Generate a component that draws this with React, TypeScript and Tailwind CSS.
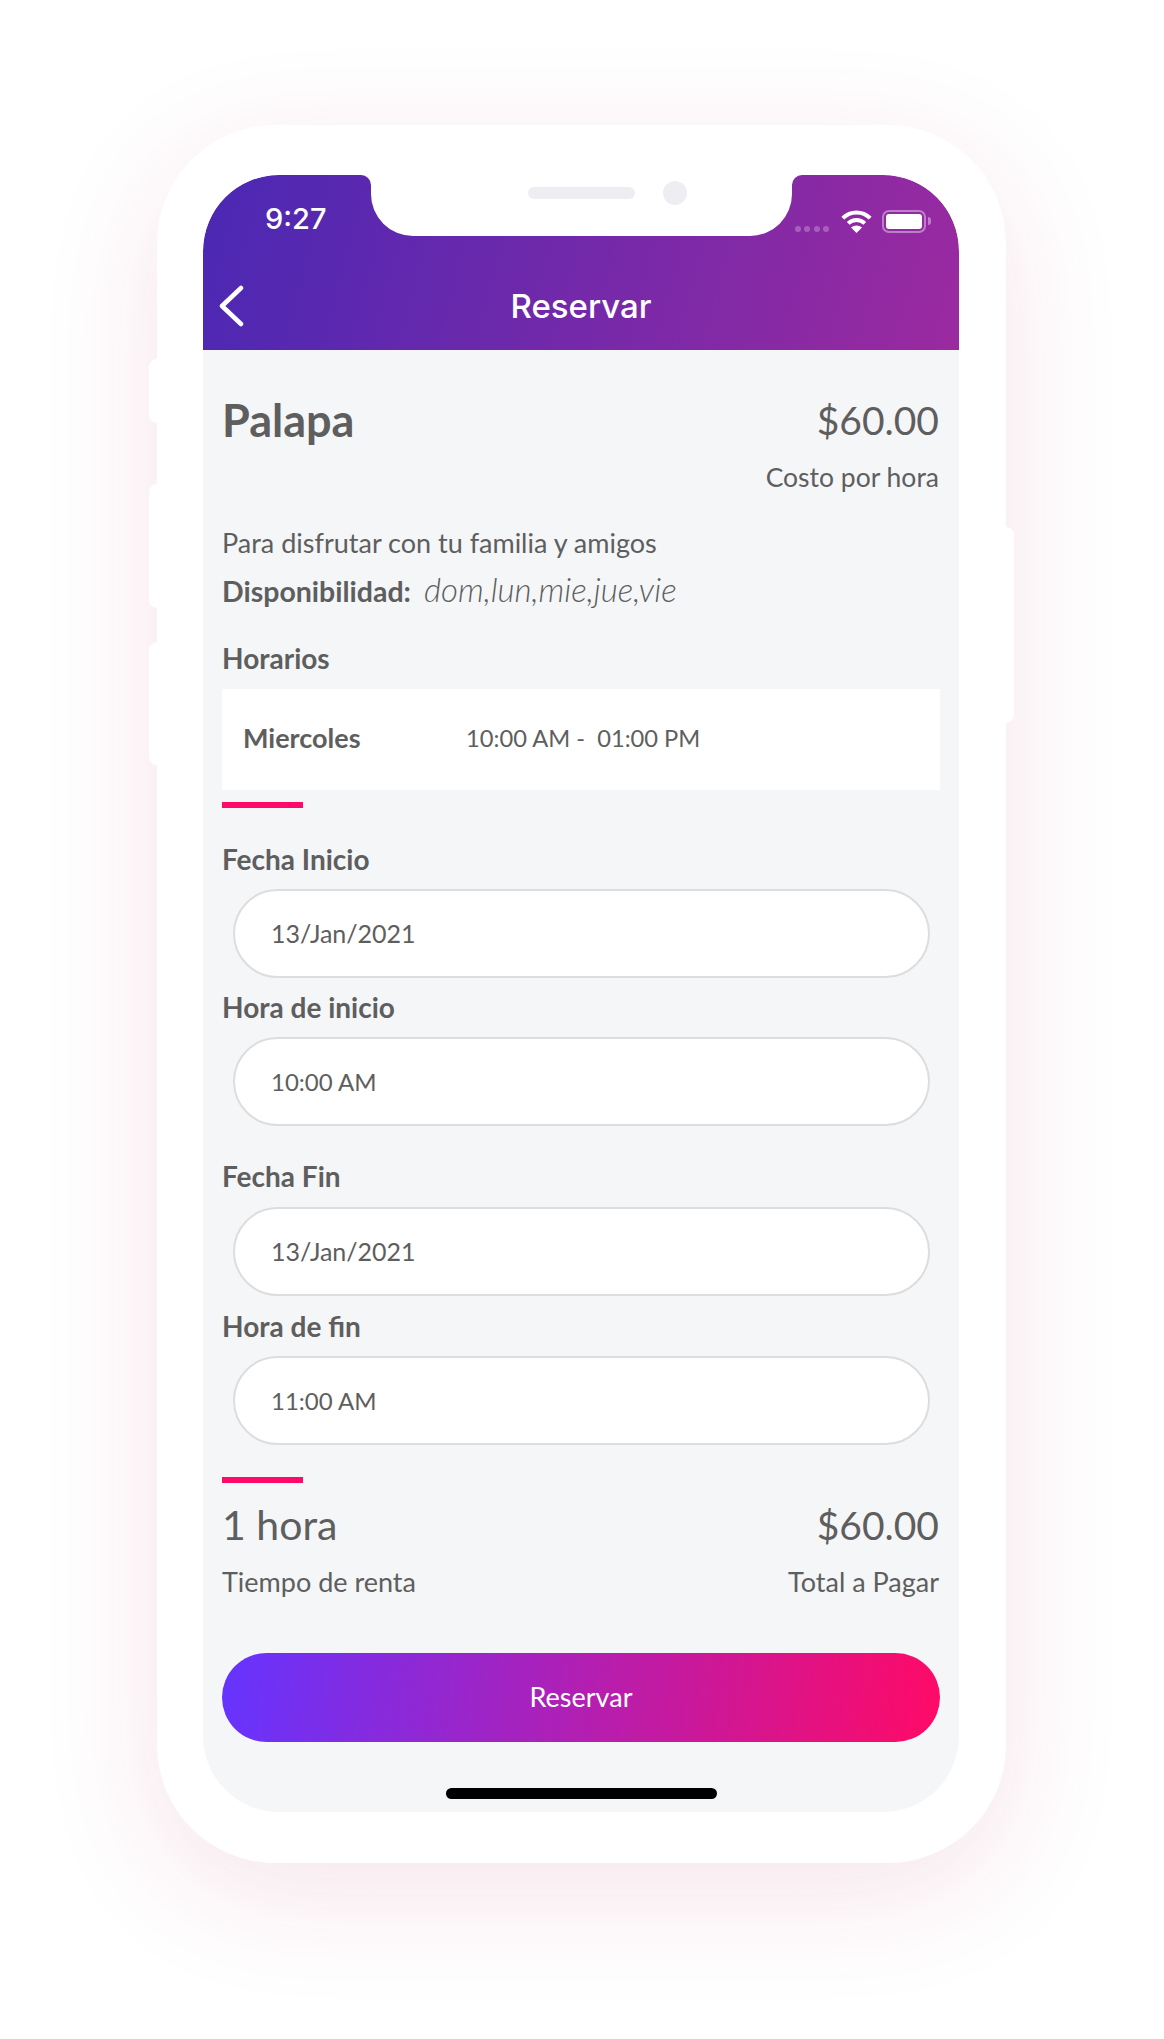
import React from "react";

const Label = ({ text, className }: { text: string; className: string }) => (
  <p className={`h-[34px] text-[28px] leading-[32px] font-bold ${className}`}>{text}</p>
);

const Field = ({ value, className }: { value: string; className: string }) => (
  <div
    className={`ml-[11px] mr-[10px] flex h-[89px] items-center rounded-full border-2 border-[#dddddd] bg-white pl-[36px] ${className}`}
  >
    {value}
  </div>
);

const RedBar = ({ className }: { className: string }) => (
  <div className={`h-[6px] w-[81px] bg-[#ff0a68] ${className}`} />
);

const Wifi = () => (
  <svg width="31" height="24" viewBox="0 0 31 24" fill="none" stroke="white">
    <path d="M1.8 9.2C9.5 1.6 21.5 1.6 29.2 9.2" strokeWidth="4" />
    <path d="M7.2 14.4C12 9.8 19 9.8 23.8 14.4" strokeWidth="4" />
    <path d="M15.5 24L10 18.6C13 15.8 18 15.8 21 18.6Z" fill="white" stroke="none" />
  </svg>
);

const Battery = () => (
  <div className="flex items-center gap-[2px]">
    <div className="h-[23px] w-[44px] rounded-[7px] border-2 border-white/40 p-[2px]">
      <div className="h-full w-full rounded-[3px] bg-white" />
    </div>
    <div className="h-[8px] w-[3px] rounded-r-full bg-white/40" />
  </div>
);

const App = () => {
  return (
    <div className="h-[2039px] w-[1164px] overflow-hidden bg-white pl-[157px] pt-[125px] font-['Lato',sans-serif] text-[#5e5e5e]">
      <div className="relative h-[1738px] w-[849px] rounded-[118px] bg-white px-[46px] pt-[50px] shadow-[0_30px_120px_rgba(185,30,85,0.12)]">
        {/* side buttons */}
        <div className="absolute left-[-8px] top-[234px] h-[64px] w-[8px] rounded-l-lg bg-white" />
        <div className="absolute left-[-8px] top-[359px] h-[124px] w-[8px] rounded-l-lg bg-white" />
        <div className="absolute left-[-8px] top-[517px] h-[123px] w-[8px] rounded-l-lg bg-white" />
        <div className="absolute right-[-8px] top-[402px] h-[196px] w-[8px] rounded-r-lg bg-white" />

        <div className="h-[1637px] w-[756px] overflow-hidden rounded-[76px] bg-[#f5f6f8]">
          {/* header */}
          <div className="relative h-[175px] bg-white">
            <div className="h-full bg-[linear-gradient(105deg,#4a28b4,#9b2aa0)] [clip-path:path('M0_175V76A76_76_0_0_1_76_0H158A10_10_0_0_1_168_10V19A42_42_0_0_0_210_61H547A42_42_0_0_0_589_19V10A10_10_0_0_1_599_0H680A76_76_0_0_1_756_76V175Z')]">
              <div className="flex h-[61px] items-end">
                <span className="mb-[1px] ml-[62px] font-['Inter',sans-serif] text-[29px] font-medium leading-[32px] text-white">
                  9:27
                </span>
                <div className="mb-[3px] ml-auto mr-[28px] flex items-center">
                  <div className="mr-[12px] mt-[16px] flex gap-[3.3px]">
                    <i className="h-[6px] w-[6px] rounded-full bg-white/25" />
                    <i className="h-[6px] w-[6px] rounded-full bg-white/25" />
                    <i className="h-[6px] w-[6px] rounded-full bg-white/25" />
                    <i className="h-[6px] w-[6px] rounded-full bg-white/25" />
                  </div>
                  <Wifi />
                  <div className="ml-[10px]">
                    <Battery />
                  </div>
                </div>
              </div>
              <div className="relative flex h-[114px] items-center justify-center pt-[27px]">
                <svg
                  className="absolute left-[16px] top-[49px]"
                  width="26"
                  height="42"
                  viewBox="0 0 26 42"
                  fill="none"
                  stroke="white"
                  strokeWidth="4.5"
                  strokeLinecap="round"
                  strokeLinejoin="round"
                >
                  <path d="M22 3L3 21L22 39" />
                </svg>
                <span className="font-['Inter',sans-serif] text-[33px] font-medium text-white">
                  Reservar
                </span>
              </div>
            </div>
            {/* speaker and camera sit in the notch */}
            <div className="absolute left-[325px] top-[12px] h-[12px] w-[107px] rounded-full bg-[#eeeef2]" />
            <div className="absolute left-[460px] top-[6px] h-[24px] w-[24px] rounded-full bg-[#eeeef2]" />
          </div>

          {/* body */}
          <div className="px-[19px] pt-[46px]">
            <div className="flex items-center justify-between pr-[1px]">
              <h1 className="h-[50px] text-[45px] font-bold leading-[48px]">Palapa</h1>
              <span className="h-[50px] text-[39px] leading-[48px]">$60.00</span>
            </div>
            <p className="mt-[15px] h-[34px] pr-[1px] text-right text-[26.5px] leading-[33px]">Costo por hora</p>
            <p className="mt-[32px] h-[34px] text-[27px] leading-[31px]">Para disfrutar con tu familia y amigos</p>
            <p className="mt-[13px] h-[34px] text-[28.5px] leading-[31px]">
              <b className="font-bold">Disponibilidad:</b>
              <i className="ml-[13px] text-[33px] font-light">dom,lun,mie,jue,vie</i>
            </p>
            <Label text="Horarios" className="mt-[34px]" />
            <div className="mt-[13px] flex h-[101px] items-center bg-white pb-[2px] pl-[21px] text-[23.7px]">
              <b className="w-[223px] text-[27px] font-bold">Miercoles</b>
              <span>10:00 AM -&nbsp; 01:00 PM</span>
            </div>
            <RedBar className="mt-[12px]" />
            <Label text="Fecha Inicio" className="mt-[35px]" />
            <Field value="13/Jan/2021" className="mt-[12px] text-[25px]" />
            <Label text="Hora de inicio" className="mt-[13px]" />
            <Field value="10:00 AM" className="mt-[12px] text-[24px]" />
            <Label text="Fecha Fin" className="mt-[34px]" />
            <Field value="13/Jan/2021" className="mt-[13px] text-[25px]" />
            <Label text="Hora de fin" className="mt-[14px]" />
            <Field value="11:00 AM" className="mt-[12px] text-[24px]" />
            <RedBar className="mt-[32px]" />
            <div className="mt-[17px] flex h-[50px] items-center justify-between pr-[1px] leading-[48px]">
              <span className="text-[41px]">1 hora</span>
              <span className="text-[39px]">$60.00</span>
            </div>
            <div className="mt-[16px] flex h-[34px] justify-between pr-[1px] text-[27px] leading-[31px]">
              <span>Tiempo de renta</span>
              <span>Total a Pagar</span>
            </div>
            <button className="mt-[53px] flex h-[89px] w-[718px] items-center justify-center rounded-full bg-[linear-gradient(95deg,#6534ff,#ff0a66)] text-[27px] text-white">
              Reservar
            </button>
            <div className="mx-auto mt-[46px] h-[11px] w-[271px] rounded-full bg-black" />
          </div>
        </div>
      </div>
    </div>
  );
};

export default App;
